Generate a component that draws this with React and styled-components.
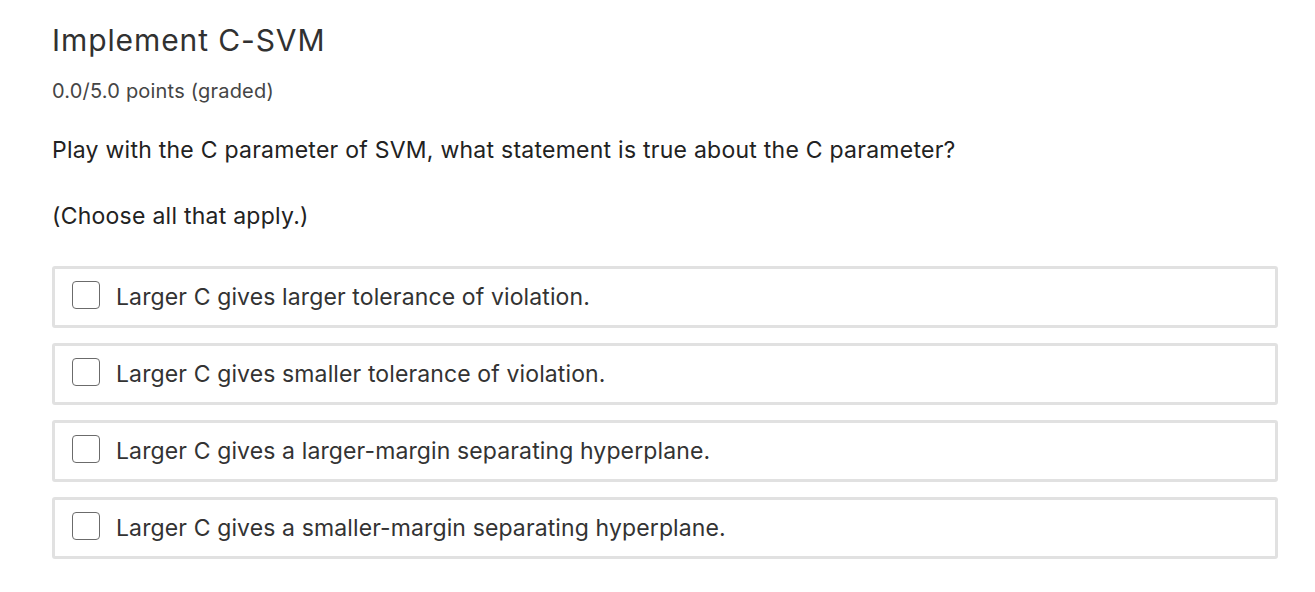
import React from "react";
import styled, { createGlobalStyle } from "styled-components";

const Global = createGlobalStyle`
  html, body { margin: 0; padding: 0; background: #fff; }
  body { font-family: Inter, "Noto Sans", "Liberation Sans", sans-serif; color: #333; }
`;

const Page = styled.div`
  padding: 22px 0 0 52px;
  width: 1226px;
`;

const Title = styled.h1`
  margin: 0;
  font-size: 30px;
  line-height: 36px;
  letter-spacing: 0.9px;
  font-weight: 400;
  color: #313131;
`;

const Points = styled.div`
  margin-top: 21px;
  font-size: 20px;
  line-height: 24px;
  letter-spacing: 0.2px;
  color: #454545;
`;

const Para = styled.p`
  margin: ${(p) => p.$mt}px 0 0;
  font-size: 23px;
  line-height: 28px;
  letter-spacing: 0.25px;
  color: #222;
`;

const Options = styled.div`
  margin-top: 36px;
  display: flex;
  flex-direction: column;
  gap: 15px;
`;

const Option = styled.label`
  box-sizing: border-box;
  height: 62px;
  display: flex;
  align-items: center;
  gap: 16px;
  padding: 0 0 0 17px;
  border: 3px solid #e1e1e1;
  border-radius: 3px;
  cursor: pointer;
`;

const Box = styled.span`
  box-sizing: border-box;
  width: 28px;
  height: 28px;
  margin-bottom: 4px;
  border: 1.5px solid #6b6b6b;
  border-radius: 4px;
  background: #fff;
  flex: none;
`;

const OptionText = styled.span`
  font-size: 23px;
  line-height: 28px;
  letter-spacing: 0.12px;
  color: #333;
`;

const options = [
  "Larger C gives larger tolerance of violation.",
  "Larger C gives smaller tolerance of violation.",
  "Larger C gives a larger-margin separating hyperplane.",
  "Larger C gives a smaller-margin separating hyperplane.",
];

export default function App() {
  return (
    <>
      <Global />
      <Page>
        <Title>Implement C-SVM</Title>
        <Points>0.0/5.0 points (graded)</Points>
        <Para $mt={33}>
          Play with the C parameter of SVM, what statement is true about the C parameter?
        </Para>
        <Para $mt={38}>(Choose all that apply.)</Para>
        <Options>
          {options.map((o) => (
            <Option key={o}>
              <Box />
              <OptionText>{o}</OptionText>
            </Option>
          ))}
        </Options>
      </Page>
    </>
  );
}
